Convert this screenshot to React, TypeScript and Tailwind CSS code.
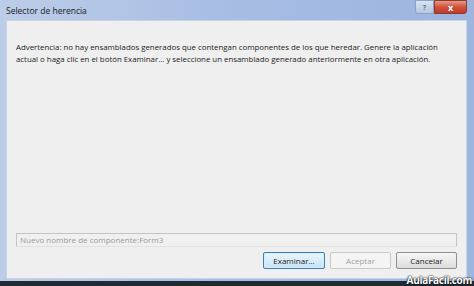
import React from "react";

export default function App() {
  const font = { fontFamily: '"Open Sans", "Noto Sans", sans-serif' };
  return (
    <div className="relative w-[474px] h-[286px] overflow-hidden bg-[#1f2a33]" style={font}>
      <div className="flex flex-col w-[474px] h-[281px] bg-gradient-to-r from-[#bccde9] via-[#a6bce3] to-[#9db5df]">
        {/* title bar */}
        <div className="relative h-[20px] flex items-center pl-[6px]">
          <span className="text-[8.5px] text-[#1b1b1b] leading-none mt-[2px]">Selector de herencia</span>
          <div className="absolute top-0 right-[7px] flex">
            <div className="w-[19px] h-[14px] rounded-bl-[3px] border border-[#8ea2c2] bg-gradient-to-b from-[#d9e3f2] to-[#b6c6e0] flex items-center justify-center">
              <span className="text-[7px] font-bold text-[#5d6f8e] leading-none">?</span>
            </div>
            <div className="w-[33px] h-[14px] rounded-br-[3px] border border-[#8b3a2e] bg-gradient-to-b from-[#e39a88] via-[#d0513b] to-[#c23a27] flex items-center justify-center">
              <span className="text-[9px] font-bold text-white leading-none">x</span>
            </div>
          </div>
        </div>
        {/* content */}
        <div className="flex-1 mx-[6px] mr-[7px] mb-[2px] bg-[#efefef] border border-[#c9d3e2] flex flex-col pl-[9px] pr-[9px]">
          <div className="pt-[20px] text-[7.85px] leading-[12px] text-[#222] whitespace-nowrap">
            <div>Advertencia: no hay ensamblados generados que contengan componentes de los que heredar. Genere la aplicación</div>
            <div>actual o haga clic en el botón Examinar... y seleccione un ensamblado generado anteriormente en otra aplicación.</div>
          </div>
          <div className="flex-1" />
          <div className="h-[14px] border border-[#c4c4c4] border-b-[#e2e2e2] bg-[#f0f0f0] flex items-center pl-[3px]">
            <span className="text-[8px] text-[#9a9a9a] leading-none">Nuevo nombre de componente:Form3</span>
          </div>
          <div className="flex justify-end gap-[5px] mt-[5px] mb-[9px]">
            <div className="w-[62px] h-[17px] rounded-[2px] border border-[#3c7fb1] bg-gradient-to-b from-[#eaf6fd] to-[#c7e3f6] shadow-[inset_0_0_0_1px_#d4edfb] flex items-center justify-center">
              <span className="text-[8px] text-[#1b1b1b] leading-none">Examinar...</span>
            </div>
            <div className="w-[61px] h-[17px] rounded-[2px] border border-[#c9c9c9] bg-[#f4f4f4] flex items-center justify-center">
              <span className="text-[8px] text-[#a3a3a3] leading-none">Aceptar</span>
            </div>
            <div className="w-[61px] h-[17px] rounded-[2px] border border-[#8e8f8f] bg-gradient-to-b from-[#f6f6f6] to-[#dcdcdc] flex items-center justify-center">
              <span className="text-[8px] text-[#1b1b1b] leading-none">Cancelar</span>
            </div>
          </div>
        </div>
      </div>
      <div className="absolute right-[2px] bottom-[1px] text-[10px] font-bold text-white leading-none tracking-[-0.3px] [text-shadow:0_0_2px_#000,0_0_1px_#000]">
        AulaFacil.com
      </div>
    </div>
  );
}
